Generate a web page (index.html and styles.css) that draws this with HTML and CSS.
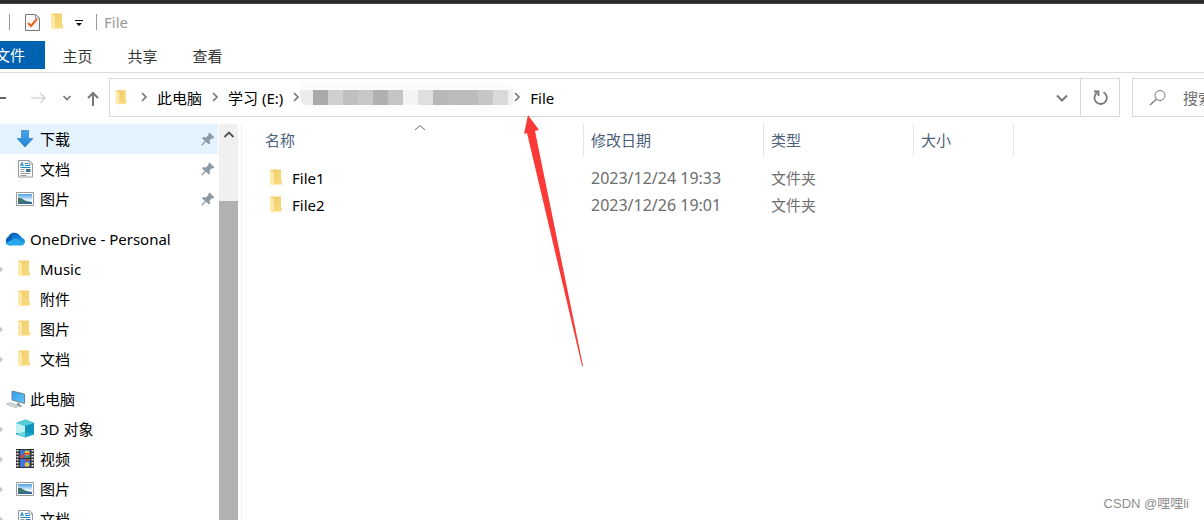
FILE: index.html
```
<!DOCTYPE html>
<html lang="zh-CN">
<head>
    <meta charset="utf-8">
    <title>File</title>
    <link rel="stylesheet" href="styles.css">
</head>
<body>
    <!-- icon sprite -->
    <svg class="sprite">
        <defs>
            <linearGradient id="gold" x1="0" y1="0" x2="1" y2="1">
                <stop offset="0" stop-color="#edcb68"/>
                <stop offset="1" stop-color="#fbdd83"/>
            </linearGradient>
            <linearGradient id="down" x1="0" y1="0" x2="0" y2="1">
                <stop offset="0" stop-color="#4ba6ea"/>
                <stop offset="1" stop-color="#1f83d6"/>
            </linearGradient>
            <linearGradient id="sky" x1="0" y1="0" x2="0" y2="1">
                <stop offset="0" stop-color="#4f9fe8"/>
                <stop offset=".6" stop-color="#e4f4fc"/>
            </linearGradient>
            <linearGradient id="screen" x1="0" y1="0" x2="1" y2="1">
                <stop offset="0" stop-color="#2f9bea"/>
                <stop offset="1" stop-color="#67c4fb"/>
            </linearGradient>
        </defs>
        <symbol id="folder" viewBox="0 0 20 20">
            <path d="M4 1.500h10v10.500l1 1v3.500H4z" fill="url(#gold)"/>
            <path d="M3 1.500l4 2v14.500L3 16z" fill="#ffe9a8"/>
            <path d="M3 1.500l4 2v1L3 2.500z" fill="#f5dc92"/>
        </symbol>
        <symbol id="sep" viewBox="0 0 20 20">
            <path d="M8 5l4 4-4 4" fill="none" stroke="#777" stroke-width="1.700"/>
        </symbol>
        <symbol id="pin" viewBox="0 0 20 20">
            <path d="M12 2l6 6-1.500 1.500-1.500-.500-3 3 .500 3.500-1.500 1.500-3.500-3.500L3 18l-1.500-.500 4.500-5L2.500 9 4 7.500l3.500.500 3-3L10.500 3.500z" fill="#8d99a3"/>
        </symbol>
        <symbol id="download" viewBox="0 0 20 20">
            <path d="M6.500 1.500h7v8h4.500L10 18 2 9.500h4.500z" fill="url(#down)" stroke="#2d7fc4" stroke-width=".7"/>
        </symbol>
        <symbol id="document" viewBox="0 0 20 20">
            <path d="M3.500 1.500h11L17.500 4.500v13.500h-14z" fill="#fff" stroke="#999"/>
            <path d="M14 1.500v3.500h3.500" fill="#eee" stroke="#999"/>
            <path d="M5.500 7L7 3.500l1.500 3.500M6 6h2M10 4.500h3M10 6.500h5M5.500 8.500h10" fill="none" stroke="#1687c8"/>
            <path d="M5.500 10.500h4M5.500 12.500h4M5.500 14.500h10M5.500 16.500h6" stroke="#999"/>
            <path d="M11 10h4.500v3H11z" fill="#3c7191"/>
        </symbol>
        <symbol id="picture" viewBox="0 0 20 20">
            <path d="M1.500 3.500h17v13h-17z" fill="#fff" stroke="#999"/>
            <path d="M3 5h14v10H3z" fill="url(#sky)"/>
            <path d="M3 9l3 0 4 2.500 4 1 3 .500v2H3z" fill="#42766b"/>
            <path d="M3 13.500h5l9-.500V15H3z" fill="#326b99"/>
        </symbol>
        <symbol id="cloud" viewBox="0 0 20 20">
            <path d="M4.500 16.500A4.800 4.800 0 0 1 3.500 7.500 6.500 6.500 0 0 1 14 5.500l-5 10z" fill="#0a5fb8"/>
            <path d="M7 7a6 6 0 0 1 9.500 1.500l1 5-12 2.500z" fill="#0f77d2"/>
            <path d="M4.500 16.500a5 5 0 0 1-4-2.500L11 9l8.500 5.500a3.500 3.500 0 0 1-3 2z" fill="#28a8ea"/>
            <path d="M12 10l4-1.500a4.300 4.300 0 0 1 3.500 6z" fill="#1490df"/>
        </symbol>
        <symbol id="computer" viewBox="0 0 20 20">
            <path d="M7 2L19.500 5v9.500L7 11z" fill="url(#screen)" stroke="#6f8695"/>
            <path d="M12 13.500l3 1v1.500l3 1-3 1-5-2 2-.500z" fill="#8d979f"/>
            <path d="M1 15l4-1.500 9 3.500-3 1.800z" fill="#d4d9dc" stroke="#aab1b5" stroke-width=".6"/>
        </symbol>
        <symbol id="cube" viewBox="0 0 20 20">
            <path d="M1 4L10.500 .500 19 4v11.500L10.500 18.500 1 15.500z" fill="#1ba8c5"/>
            <path d="M1 4L10.500 .500 19 4l-9 3z" fill="#54cddb"/>
            <path d="M1 4l9 3v8l-9-1z" fill="#c1f1f1"/>
            <path d="M1 15.500l9-3v6z" fill="#69d5dc"/>
            <path d="M10 7l9-3v11.500l-9-3z" fill="#1293be"/>
        </symbol>
        <symbol id="video" viewBox="0 0 20 20">
            <path d="M1 0h18v19H1z" fill="#333"/>
            <path d="M2.500 1v18M17.500 1v18" stroke="#eee" stroke-width="2" stroke-dasharray="1.500 1.500"/>
            <path d="M5 1h10v8H5zM5 10h10v8H5z" fill="#3e74d8"/>
            <circle cx="12" cy="4" r="2.500" fill="#f1c52d"/>
            <path d="M9 4h6v1.500H9zM5 6.500l4-1v3H5z" fill="#d8422f"/>
            <path d="M10 7h5v1.500h-5z" fill="#45933e"/>
            <circle cx="12" cy="15.500" r="2.300" fill="#f1c52d"/>
            <path d="M9.500 10h5L12 13z" fill="#c84131"/>
        </symbol>
    </svg>

    <div class="strip"></div>

    <header class="titlebar">
        <span class="bar"></span>
        <svg class="icon check" viewBox="0 0 20 20">
            <path d="M3.500 2.500h10L17.500 6v12.500h-14z" fill="#f8f8f8" stroke="#777"/>
            <path d="M13.500 2.500V6h4" fill="none" stroke="#999"/>
            <path d="M6 11l3 3 6-7" fill="none" stroke="#ec5b20" stroke-width="2"/>
        </svg>
        <svg class="icon quick"><use href="#folder"/></svg>
        <svg class="customize" viewBox="0 0 10 8">
            <path d="M1 1h8v1H1zM2 4h6L5 7z" fill="#111"/>
        </svg>
        <span class="bar"></span>
        <h1>File</h1>
    </header>

    <nav class="tabs">
        <button class="tab file">文件</button>
        <button class="tab">主页</button>
        <button class="tab">共享</button>
        <button class="tab">查看</button>
    </nav>

    <div class="toolbar">
        <button class="nav back" aria-label="后退">
            <svg viewBox="0 0 20 20"><path d="M3 10h15M9 4l-6 6 6 6" fill="none" stroke="#666" stroke-width="2"/></svg>
        </button>
        <button class="nav forward" aria-label="前进">
            <svg viewBox="0 0 20 20"><path d="M3 10h14M12 5l5 5-5 5" fill="none" stroke="#d8d8d8" stroke-width="1.700"/></svg>
        </button>
        <button class="nav recent" aria-label="最近浏览的位置">
            <svg viewBox="0 0 20 20"><path d="M6.500 8l3.500 3.500L13.500 8" fill="none" stroke="#777" stroke-width="1.700"/></svg>
        </button>
        <button class="nav up" aria-label="上移">
            <svg viewBox="0 0 20 20"><path d="M10 18V5M5 10l5-5 5 5" fill="none" stroke="#777" stroke-width="2"/></svg>
        </button>
        <div class="address">
            <svg class="icon"><use href="#folder"/></svg>
            <svg class="sep"><use href="#sep"/></svg>
            <a href="#">此电脑</a>
            <svg class="sep"><use href="#sep"/></svg>
            <a href="#">学习 (E:)</a>
            <svg class="sep"><use href="#sep"/></svg>
            <svg class="mosaic" viewBox="0 0 213 31">
                <path d="M0 0h200q12 0 13 8v17q-4 6-20 5L20 27Q0 28 0 18z" fill="#fcfcfc"/>
                <path d="M0 8h13v15H5q-4-3-5-8z" fill="#ebebeb"/>
                <path d="M13 8h15v15H13z" fill="#a9a9a9"/>
                <path d="M28 8h15v15H28z" fill="#d0d0d0"/>
                <path d="M43 8h15v15H43z" fill="#bfbfbf"/>
                <path d="M58 8h15v15H58z" fill="#c8c8c8"/>
                <path d="M73 8h15v15H73z" fill="#b0b0b0"/>
                <path d="M88 8h15v15H88z" fill="#c5c5c5"/>
                <path d="M103 8h15v15h-15z" fill="#f4f4f4"/>
                <path d="M118 8h15v15h-15z" fill="#dfdfdf"/>
                <path d="M133 8h15v15h-15z" fill="#b8b8b8"/>
                <path d="M148 8h30v15h-30z" fill="#bcbcbc"/>
                <path d="M178 8h15v15h-15z" fill="#c6c6c6"/>
                <path d="M193 8h15v15h-15z" fill="#d9d9d9"/>
                <path d="M208 8h5v15h-5z" fill="#f1f1f1"/>
            </svg>
            <svg class="sep"><use href="#sep"/></svg>
            <a href="#">File</a>
            <button class="history" aria-label="以前的位置">
                <svg viewBox="0 0 20 20"><path d="M5 7.500l5 5 5-5" fill="none" stroke="#777" stroke-width="2"/></svg>
            </button>
            <button class="refresh" aria-label="刷新">
                <svg viewBox="0 0 20 20"><path d="M13.500 4.300A6.200 6.200 0 1 1 7 4.800" fill="none" stroke="#777" stroke-width="1.800"/><path d="M4 3.500h4.500V8" fill="none" stroke="#777" stroke-width="1.800"/></svg>
            </button>
        </div>
        <div class="search">
            <svg viewBox="0 0 20 20"><circle cx="13" cy="7.500" r="5" fill="none" stroke="#777"/><path d="M9.500 11L3 17" stroke="#777" stroke-width="1.300"/></svg>
            <input type="text" placeholder="搜索" aria-label="搜索">
        </div>
    </div>

    <main>
        <aside>
            <ul class="tree">
                <li class="selected"><i></i><svg class="icon"><use href="#download"/></svg><a href="#">下载</a><svg class="pin"><use href="#pin"/></svg></li>
                <li><i></i><svg class="icon"><use href="#document"/></svg><a href="#">文档</a><svg class="pin"><use href="#pin"/></svg></li>
                <li><i></i><svg class="icon"><use href="#picture"/></svg><a href="#">图片</a><svg class="pin"><use href="#pin"/></svg></li>
                <li class="root"><svg class="icon"><use href="#cloud"/></svg><a href="#">OneDrive - Personal</a></li>
                <li class="closed"><i></i><svg class="icon"><use href="#folder"/></svg><a href="#">Music</a></li>
                <li><i></i><svg class="icon"><use href="#folder"/></svg><a href="#">附件</a></li>
                <li class="closed"><i></i><svg class="icon"><use href="#folder"/></svg><a href="#">图片</a></li>
                <li class="closed"><i></i><svg class="icon"><use href="#folder"/></svg><a href="#">文档</a></li>
                <li class="root"><svg class="icon"><use href="#computer"/></svg><a href="#">此电脑</a></li>
                <li class="closed"><i></i><svg class="icon"><use href="#cube"/></svg><a href="#">3D 对象</a></li>
                <li class="closed"><i></i><svg class="icon"><use href="#video"/></svg><a href="#">视频</a></li>
                <li class="closed"><i></i><svg class="icon"><use href="#picture"/></svg><a href="#">图片</a></li>
                <li class="closed"><i></i><svg class="icon"><use href="#document"/></svg><a href="#">文档</a></li>
            </ul>
            <div class="scrollbar">
                <button aria-label="向上滚动">
                    <svg viewBox="0 0 20 20"><path d="M5.500 13L10 8.500l4.500 4.500" fill="none" stroke="#505050" stroke-width="1.800"/></svg>
                </button>
                <div class="thumb"></div>
            </div>
        </aside>

        <section class="files">
            <table>
                <colgroup>
                    <col class="c-name">
                    <col class="c-date">
                    <col class="c-type">
                    <col class="c-size">
                </colgroup>
                <thead>
                    <tr>
                        <th>名称<svg class="sorted" viewBox="0 0 12 8"><path d="M2 6l5-4.500L12 6" fill="none" stroke="#666"/></svg></th>
                        <th>修改日期</th>
                        <th>类型</th>
                        <th>大小</th>
                    </tr>
                </thead>
                <tbody>
                    <tr>
                        <td><div class="name"><svg class="icon"><use href="#folder"/></svg>File1</div></td>
                        <td class="date">2023/12/24 19:33</td>
                        <td>文件夹</td>
                        <td></td>
                    </tr>
                    <tr>
                        <td><div class="name"><svg class="icon"><use href="#folder"/></svg>File2</div></td>
                        <td class="date">2023/12/26 19:01</td>
                        <td>文件夹</td>
                        <td></td>
                    </tr>
                </tbody>
            </table>
        </section>
    </main>

    <svg class="pointer" viewBox="0 0 60 252">
        <path d="M4 0L15 15l-4 1 48 235h-1L3 18l-3 1z" fill="#fb3a38"/>
    </svg>
    <span class="watermark">CSDN @哩哩li</span>
</body>
</html>
```
FILE: styles.css
```
* {
    box-sizing: border-box;
}

body {
    margin: 0;
    height: 100vh;
    display: flex;
    flex-direction: column;
    position: relative;
    overflow: hidden;
    background: #fff;
    color: #000;
    font: 15px/20px "Noto Sans", "Noto Sans CJK SC", sans-serif;
}

a {
    color: inherit;
    text-decoration: none;
}

button {
    display: flex;
    align-items: center;
    justify-content: center;
    padding: 0;
    border: 0;
    background: none;
    font: inherit;
    color: inherit;
}

svg {
    display: block;
    flex: none;
    width: 20px;
    height: 20px;
}

.sprite {
    position: absolute;
    width: 0;
    height: 0;
}

.strip {
    flex: none;
    height: 4px;
    background: #2b2b2b;
    border-bottom: 1px solid #444;
}

/* title bar */
.titlebar {
    flex: none;
    display: flex;
    align-items: center;
    height: 37px;
    padding: 0 0 1px 9px;
}
.titlebar .bar {
    width: 1px;
    height: 16px;
    background: #999;
}
.titlebar .check {
    margin-left: 12px;
}
.titlebar .quick {
    margin-left: 6px;
}
.titlebar .customize {
    width: 10px;
    height: 8px;
    margin: 2px 12px 0 6px;
}
.titlebar h1 {
    margin: 0 0 0 7px;
    font-size: 15px;
    font-weight: normal;
    color: #999;
}

/* ribbon tabs */
.tabs {
    flex: none;
    display: flex;
    height: 32px;
    border-bottom: 1px solid #dadbdc;
}
.tab {
    width: 65px;
    height: 28px;
    padding-top: 2px;
    color: #333;
}
.tab.file {
    width: 70px;
    margin-left: -25px;
    padding-top: 0;
    background: #0063b1;
    color: #fff;
}

/* address row */
.toolbar {
    flex: none;
    display: flex;
    align-items: center;
    height: 49px;
    margin-bottom: 2px;
}
.nav {
    width: 20px;
    height: 39px;
}
.nav.back {
    margin-left: -12px;
}
.nav.forward {
    margin-left: 20px;
}
.nav.recent {
    margin-left: 9px;
}
.nav.up {
    margin: 0 6px;
}
.address {
    flex: 1;
    display: flex;
    align-items: center;
    height: 39px;
    padding-left: 3px;
    border: 1px solid #d9d9d9;
}
.address .icon {
    width: 18px;
}
.address .sep {
    width: 26px;
}
.address .mosaic {
    width: 213px;
    height: 31px;
    margin: 0 -9px;
    position: relative;
}
.address .history {
    width: 36px;
    height: 37px;
    margin-left: auto;
}
.address .refresh {
    width: 39px;
    height: 37px;
    border-left: 1px solid #d9d9d9;
}
.search {
    display: flex;
    align-items: center;
    width: 72px;
    height: 39px;
    margin-left: 12px;
    padding-left: 14px;
    border: 1px solid #d9d9d9;
    border-right: 0;
}
.search input {
    flex: 1;
    min-width: 0;
    margin-left: 16px;
    padding: 0;
    border: 0;
    outline: 0;
    font: inherit;
}
.search input::placeholder {
    color: #6d6d6d;
}

main {
    flex: 1;
    display: flex;
    min-height: 0;
}

/* navigation pane */
aside {
    display: flex;
    width: 242px;
    padding-right: 3px;
    border-right: 1px solid #f0f0f0;
}
.tree {
    flex: 1;
    margin: 0;
    padding: 0;
    overflow: hidden;
    list-style: none;
}
.tree li {
    display: flex;
    align-items: center;
    height: 30px;
    margin-right: 1px;
}
.tree .selected {
    background: #e5f3ff;
}
.tree i {
    width: 15px;
}
.tree .closed i::before {
    content: "";
    display: block;
    width: 5px;
    height: 5px;
    margin-left: -3px;
    background: #c8c8c8;
    transform: rotate(45deg);
}
.tree .icon {
    margin-right: 5px;
}
.tree .root {
    margin-top: 10px;
    padding-left: 5px;
}
.tree .pin {
    width: 16px;
    height: 16px;
    margin: 0 2px 0 auto;
}
.scrollbar {
    width: 19px;
    overflow: hidden;
    background: #f0f0f0;
}
.scrollbar button {
    width: 19px;
    height: 20px;
}
.scrollbar .thumb {
    height: 100%;
    margin-top: 57px;
    background: #b1b1b1;
}

/* file list */
.files {
    flex: 1;
}
table {
    width: 772px;
    table-layout: fixed;
    border-collapse: separate;
    border-spacing: 0;
}
.c-name {
    width: 342px;
}
.c-date {
    width: 180px;
}
.c-type {
    width: 150px;
}
.c-size {
    width: 100px;
}
th {
    position: relative;
    height: 32px;
    padding: 0 0 0 7px;
    border-right: 1px solid #e5e5e5;
    font-weight: normal;
    text-align: left;
    color: #4c607a;
}
th:first-child {
    padding-left: 23px;
}
.sorted {
    position: absolute;
    top: 0;
    left: 50%;
    width: 12px;
    height: 8px;
}
tbody::before {
    content: "";
    display: block;
    height: 8px;
}
td {
    height: 27px;
    padding: 0 0 0 7px;
    color: #6d6d6d;
}
td:first-child {
    padding-left: 25px;
    color: #000;
}
.date {
    font-size: 16px;
}
.name {
    display: flex;
    align-items: center;
    gap: 5px;
}

/* red arrow drawn over the window */
.pointer {
    position: absolute;
    top: 115px;
    left: 524px;
    width: 60px;
    height: 252px;
}
.watermark {
    position: absolute;
    right: 15px;
    bottom: 6px;
    font-family: "Liberation Sans", "Noto Sans CJK SC", sans-serif;
    font-size: 13px;
    color: #8f8f8f;
}
```
